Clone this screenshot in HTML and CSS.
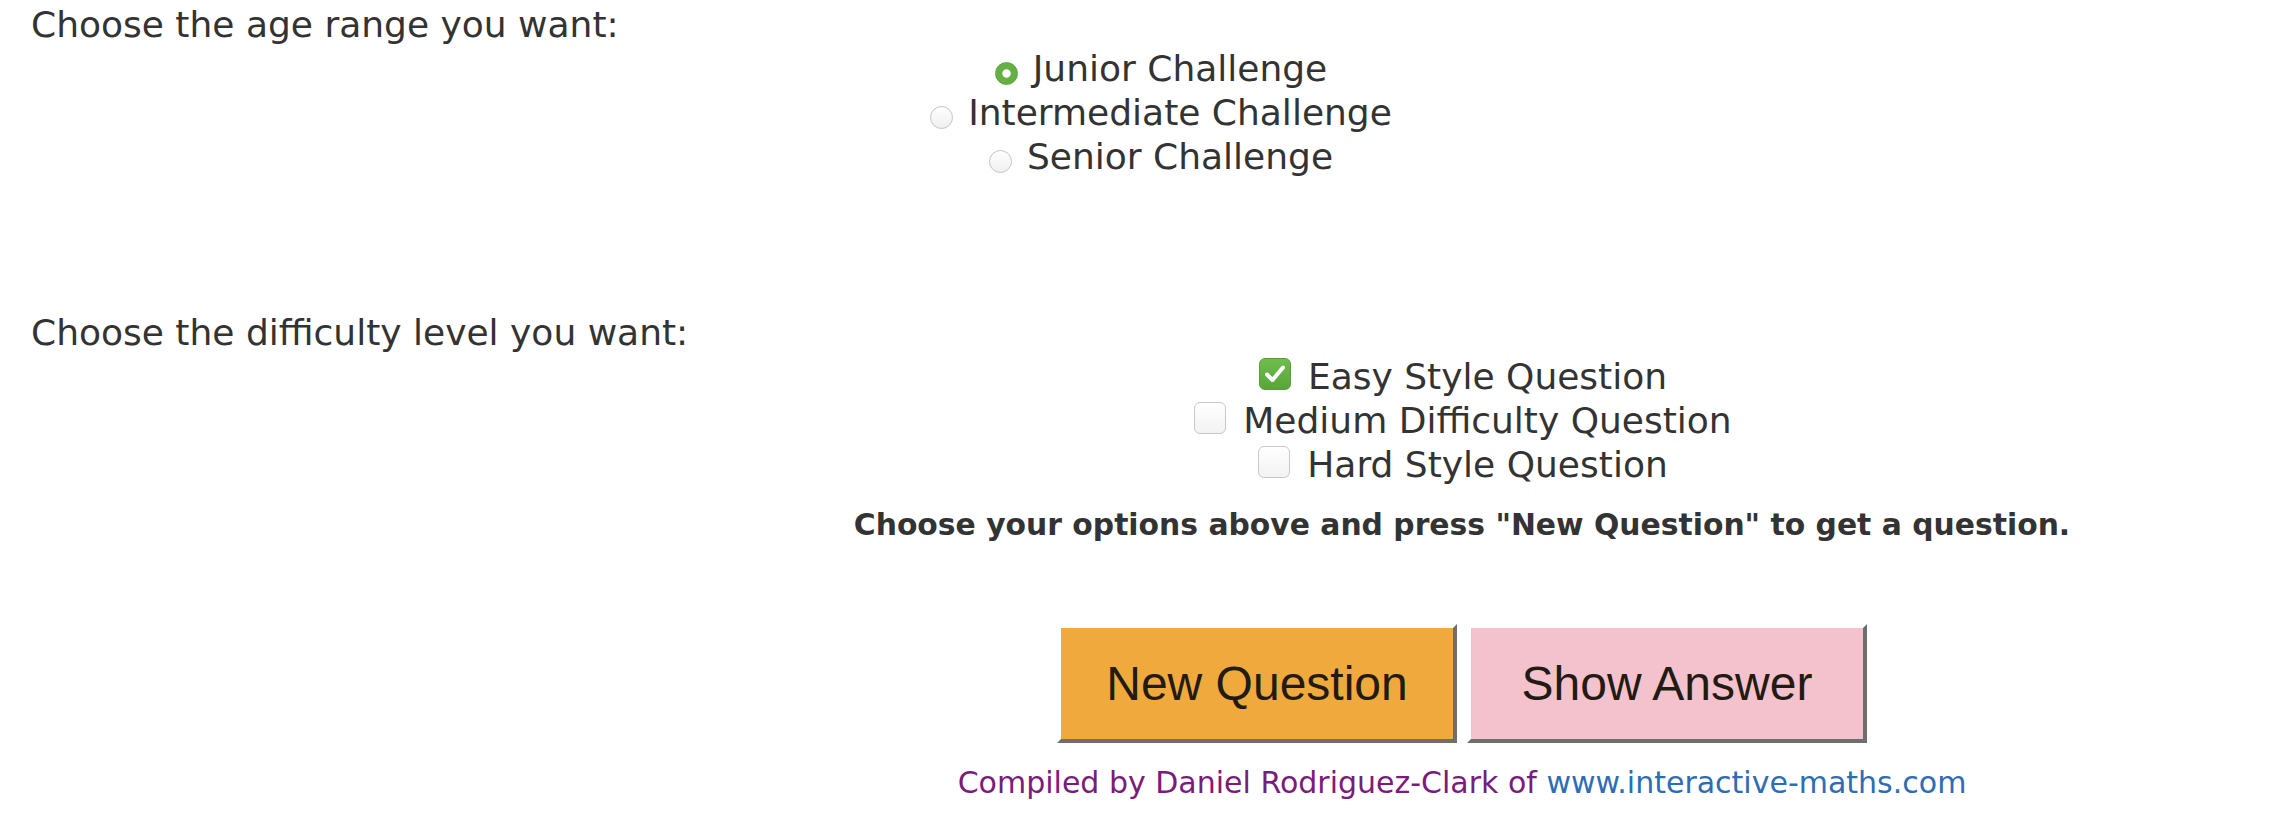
FILE: index.html
```html
<!DOCTYPE html>
<html lang="en">
<head>
<meta charset="utf-8">
<title>Challenge Questions</title>
<link rel="stylesheet" href="styles.css">
</head>
<body>
<div class="page">
  <div class="label">Choose the age range you want:</div>
  <div class="options radios">
    <div class="opt"><span class="radio checked"></span>Junior Challenge</div>
    <div class="opt"><span class="radio"></span>Intermediate Challenge</div>
    <div class="opt"><span class="radio"></span>Senior Challenge</div>
  </div>

  <div class="label label-diff">Choose the difficulty level you want:</div>
  <div class="options checks">
    <div class="opt"><span class="check checked"><svg viewBox="0 0 32 32" width="32" height="32"><path d="M8 16.5 L13.5 22 L24 9.5" fill="none" stroke="#fff" stroke-width="4" stroke-linecap="round" stroke-linejoin="round"/></svg></span>Easy Style Question</div>
    <div class="opt"><span class="check"></span>Medium Difficulty Question</div>
    <div class="opt"><span class="check"></span>Hard Style Question</div>
  </div>

  <div class="main">
    <p class="instr">Choose your options above and press "New Question" to get a question.</p>
    <div class="buttons">
      <button class="btn btn-new" type="button">New Question</button>
      <button class="btn btn-show" type="button">Show Answer</button>
    </div>
    <p class="credit">Compiled by Daniel Rodriguez-Clark of <a href="#">www.interactive-maths.com</a></p>
  </div>
</div>
</body>
</html>
```

FILE: styles.css
```css
html, body {
  margin: 0;
  padding: 0;
  background: #fff;
}

body {
  font-family: "DejaVu Sans", Verdana, sans-serif;
  font-size: 36px;
  line-height: 44px;
  color: #333;
}

.page {
  padding-top: 3px;
}

.label {
  padding-left: 31px;
}

.label-diff {
  margin-top: 132px;
}

.options {
  text-align: center;
}

.radios {
  margin-left: 48px;
}

.checks {
  margin-left: 652px;
}

.radio {
  display: inline-block;
  box-sizing: border-box;
  width: 23px;
  height: 23px;
  border-radius: 50%;
  border: 1px solid #c4c4c4;
  background: linear-gradient(#ffffff, #efefef);
  margin-right: 15px;
  vertical-align: -4px;
}

.radio.checked {
  border-color: #5ea63f;
  background: radial-gradient(circle, #ffffff 0 3.8px, #64b045 4.6px);
}

.check {
  display: inline-block;
  box-sizing: border-box;
  width: 32px;
  height: 32px;
  border-radius: 6px;
  border: 1px solid #c8c8c8;
  background: linear-gradient(#ffffff, #f2f2f2);
  margin-right: 17px;
  vertical-align: -1px;
  position: relative;
}

.check.checked {
  border-color: #5a9f3c;
  background: linear-gradient(#6fbd4c, #58a53a);
}

.check svg {
  position: absolute;
  left: -1px;
  top: -1px;
}

.main {
  margin-left: 650px;
  text-align: center;
}

.instr {
  margin: 20px 0 0;
  font-size: 29.8px;
  line-height: 36px;
  font-weight: bold;
  color: #333;
}

.buttons {
  margin-top: 81px;
  display: flex;
  justify-content: center;
  gap: 10px;
}

.btn {
  box-sizing: border-box;
  width: 400px;
  height: 119px;
  padding: 0;
  margin: 0;
  font-family: "Liberation Sans", Arial, sans-serif;
  font-size: 48px;
  color: #221b14;
  border-style: solid;
  border-width: 4px;
  border-color: #ffffff #6e6e6e #6e6e6e #ffffff;
  border-radius: 0;
  cursor: pointer;
}

.btn-new {
  background: #f0a93c;
}

.btn-show {
  background: #f4c2cc;
}

.credit {
  margin: 23px 0 0;
  font-size: 30px;
  line-height: 34px;
  color: #7b1b7d;
}

.credit a {
  color: #2e6cb6;
  text-decoration: none;
}
```
